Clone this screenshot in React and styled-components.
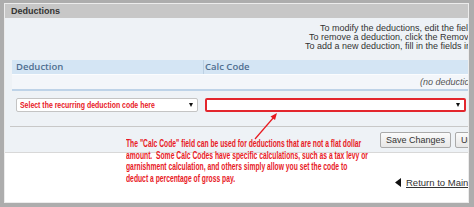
import React from 'react';
import styled, { createGlobalStyle } from 'styled-components';

const GlobalStyle = createGlobalStyle`
  html, body { margin: 0; padding: 0; }
  body {
    width: 474px;
    height: 207px;
    overflow: hidden;
    background: #adadad;
    font-family: "Liberation Sans", Arial, sans-serif;
  }
`;

const Frame = styled.div`
  position: relative;
  width: 474px;
  height: 207px;
  box-sizing: border-box;
  padding: 3px 5px 4px 4px;
  background: #adadad;
`;

const Panel = styled.div`
  height: 100%;
  box-sizing: border-box;
  border: 1px solid #ececec;
  background: #fff;
  overflow: hidden;
  display: flex;
  flex-direction: column;
`;

const TitleBar = styled.div`
  height: 14px;
  line-height: 14px;
  padding-left: 6px;
  background: #c7c7c7;
  color: #333;
  font-weight: bold;
  font-size: 9px;
  flex-shrink: 0;
`;

const Body = styled.div`
  background: #eef2f6;
  border-bottom: 1px solid #d8d8d8;
  flex-shrink: 0;
`;

const Instructions = styled.div`
  padding-top: 6px;
  font-size: 9px;
  line-height: 9px;
  color: #333;
`;

const InstructionLine = styled.div`
  white-space: nowrap;
  padding-left: ${p => p.$indent}px;
`;

const Table = styled.div`
  margin: 9px 0 0 7px;
  width: 560px;
`;

const HeadRow = styled.div`
  display: grid;
  grid-template-columns: 191px 1fr;
  height: 14px;
  background: #d4e5f4;
  color: #4f6e90;
  font-family: "Open Sans", sans-serif;
  font-weight: 600;
  font-size: 9.5px;
  line-height: 14px;
`;

const HeadCell = styled.div`
  padding-left: ${p => p.$pad}px;
  border-left: ${p => (p.$divider ? '1px solid #bcd0e3' : 'none')};
`;

const EmptyRow = styled.div`
  height: 14px;
  border-top: 1px solid #fafcfe;
  border-bottom: 2px solid #bed3e8;
  background: #f3f6fa;
  padding-left: 408px;
  font-size: 9px;
  font-style: italic;
  line-height: 14px;
  color: #555;
  white-space: nowrap;
`;

const SelectRow = styled.div`
  display: grid;
  grid-template-columns: 191px 1fr;
  height: 35px;
  align-items: start;
  padding-top: 7px;
  box-sizing: border-box;
`;

const Select = styled.div`
  position: relative;
  box-sizing: border-box;
  height: 14px;
  width: ${p => p.$width}px;
  margin-left: ${p => p.$offset}px;
  background: #fff;
  border: ${p => (p.$invalid ? '2px solid #e3262d' : '1px solid #c4c4c4')};
  border-radius: 2px;
  padding-left: 3px;
  color: #e8191f;
  font-weight: bold;
  font-size: 9px;
  line-height: 12px;
  white-space: nowrap;
`;

// the source uses a heavy condensed face; squeeze Liberation Sans to its width
const Squeezed = styled.span`
  display: inline-block;
  transform: scaleX(${p => p.$scale});
  transform-origin: left center;
`;

const Caret = styled.span`
  position: absolute;
  right: 4px;
  top: 50%;
  transform: translateY(-50%);
  width: 0;
  height: 0;
  border-left: 2.5px solid transparent;
  border-right: 2.5px solid transparent;
  border-top: 4px solid #111;
`;

const Divider = styled.div`
  height: 1px;
  margin-left: 5px;
  background: #c8c8c8;
`;

const ButtonBar = styled.div`
  display: flex;
  gap: 4px;
  height: 25px;
  padding: 5px 0 0 375px;
  box-sizing: border-box;
  white-space: nowrap;
`;

const Button = styled.button`
  height: 16px;
  padding: 0 5px;
  border: 1px solid #aaa;
  border-radius: 2px;
  background: linear-gradient(#fbfbfb, #e7e7e7);
  color: #333;
  font-family: "Liberation Sans", Arial, sans-serif;
  font-size: 9px;
  flex-shrink: 0;
`;

const Footer = styled.div`
  flex: 1;
  background: #fff;
  padding: 20px 0 0 390px;
  box-sizing: border-box;
`;

const ReturnLink = styled.a`
  display: inline-flex;
  align-items: center;
  gap: 5px;
  white-space: nowrap;
  color: #333;
  font-size: 9.5px;
  line-height: 12px;
  span { text-decoration: underline; }
`;

const Note = styled.div`
  position: absolute;
  left: 126px;
  top: 138px;
  color: #e8191f;
  font-weight: bold;
  font-size: 10px;
  line-height: 11.7px;
  white-space: pre;
  transform: scaleX(0.675);
  transform-origin: left top;
`;

const Arrow = styled.svg`
  position: absolute;
  left: 0;
  top: 0;
  pointer-events: none;
`;

export default function App() {
  return (
    <>
      <GlobalStyle />
      <Frame>
        <Panel>
          <TitleBar>Deductions</TitleBar>
          <Body>
            <Instructions>
              <InstructionLine $indent={315}>To modify the deductions, edit the fields below and click Save Changes.</InstructionLine>
              <InstructionLine $indent={304}>To remove a deduction, click the Remove box and click Save Changes.</InstructionLine>
              <InstructionLine $indent={300}>To add a new deduction, fill in the fields in the blank row.</InstructionLine>
            </Instructions>
            <Table>
              <HeadRow>
                <HeadCell $pad={4}>Deduction</HeadCell>
                <HeadCell $pad={1} $divider>Calc Code</HeadCell>
              </HeadRow>
              <EmptyRow>(no deductions)</EmptyRow>
              <SelectRow>
                <Select $width={182} $offset={4}>
                  <Squeezed $scale={0.77}>Select the recurring deduction code here</Squeezed>
                  <Caret />
                </Select>
                <Select $width={261} $offset={2} $invalid>
                  <Caret />
                </Select>
              </SelectRow>
            </Table>
            <Divider />
            <ButtonBar>
              <Button>Save Changes</Button>
              <Button>Undo Changes</Button>
            </ButtonBar>
          </Body>
          <Footer>
            <ReturnLink href="#">
              <svg width="6" height="9" viewBox="0 0 6 9">
                <polygon points="6,0 6,9 0,4.5" fill="#111" />
              </svg>
              <span>Return to Main Menu</span>
            </ReturnLink>
          </Footer>
        </Panel>
        <Note>{`The "Calc Code" field can be used for deductions that are not a flat dollar
amount.  Some Calc Codes have specific calculations, such as a tax levy or
garnishment calculation, and others simply allow you set the code to
deduct a percentage of gross pay.`}</Note>
        <Arrow width="474" height="207" viewBox="0 0 474 207">
          <line x1="255" y1="139" x2="274" y2="117" stroke="#e8191f" strokeWidth="1.2" />
          <polygon points="277,113 270.5,116.5 275,120" fill="#e8191f" />
        </Arrow>
      </Frame>
    </>
  );
}
